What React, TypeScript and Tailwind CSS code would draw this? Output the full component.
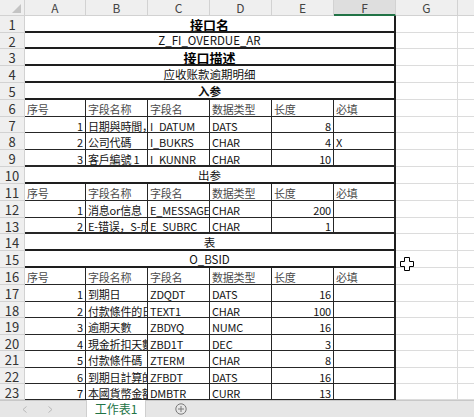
import React from 'react';

type Row =
  | { kind: 'merged'; text: string; weight?: 'bold' | 'semi'; b: 1 | 2 }
  | { kind: 'cells'; cells: string[]; head?: boolean; b: 1 | 2 };

const HEAD = ['序号', '字段名称', '字段名', '数据类型', '长度', '必填'];

const rows: Row[] = [
  { kind: 'merged', text: '接口名', weight: 'bold', b: 2 },
  { kind: 'merged', text: 'Z_FI_OVERDUE_AR', b: 2 },
  { kind: 'merged', text: '接口描述', weight: 'bold', b: 2 },
  { kind: 'merged', text: '应收账款逾期明细', b: 2 },
  { kind: 'merged', text: '入参', weight: 'semi', b: 2 },
  { kind: 'cells', cells: HEAD, head: true, b: 1 },
  { kind: 'cells', cells: ['1', '日期與時間，格式', 'I_DATUM', 'DATS', '8', ''], b: 1 },
  { kind: 'cells', cells: ['2', '公司代碼', 'I_BUKRS', 'CHAR', '4', 'X'], b: 1 },
  { kind: 'cells', cells: ['3', '客戶編號 1', 'I_KUNNR', 'CHAR', '10', ''], b: 2 },
  { kind: 'merged', text: '出参', b: 2 },
  { kind: 'cells', cells: HEAD, head: true, b: 1 },
  { kind: 'cells', cells: ['1', '消息or信息', 'E_MESSAGE', 'CHAR', '200', ''], b: 1 },
  { kind: 'cells', cells: ['2', 'E-错误，S-成功', 'E_SUBRC', 'CHAR', '1', ''], b: 2 },
  { kind: 'merged', text: '表', b: 2 },
  { kind: 'merged', text: 'O_BSID', b: 2 },
  { kind: 'cells', cells: HEAD, head: true, b: 1 },
  { kind: 'cells', cells: ['1', '到期日', 'ZDQDT', 'DATS', '16', ''], b: 1 },
  { kind: 'cells', cells: ['2', '付款條件的日期', 'TEXT1', 'CHAR', '100', ''], b: 1 },
  { kind: 'cells', cells: ['3', '逾期天數', 'ZBDYQ', 'NUMC', '16', ''], b: 1 },
  { kind: 'cells', cells: ['4', '現金折扣天數', 'ZBD1T', 'DEC', '3', ''], b: 1 },
  { kind: 'cells', cells: ['5', '付款條件碼', 'ZTERM', 'CHAR', '8', ''], b: 1 },
  { kind: 'cells', cells: ['6', '到期日計算的基準', 'ZFBDT', 'DATS', '16', ''], b: 1 },
  { kind: 'cells', cells: ['7', '本國貨幣金額', 'DMBTR', 'CURR', '13', ''], b: 1 },
];

// row heights, screenshot is a scaled excel window
const heights = [17, 16, 17, 17, 17, 17, 16, 17, 17, 17, 17, 17, 16, 17, 17, 17, 17, 16, 17, 16, 17, 16, 16];

const colLetters = ['A', 'B', 'C', 'D', 'E', 'F'];

function GridTail() {
  return (
    <>
      <div className="w-[62px] shrink-0 border-r border-b border-[#dcdcdc]" />
      <div className="flex-1 border-b border-[#dcdcdc]" />
    </>
  );
}

function SheetRow({ row, n, h }: { row: Row; n: number; h: number }) {
  const hClass = h === 17 ? 'h-[17px]' : 'h-[16px]';
  const bb = row.b === 2 ? 'border-b-2' : 'border-b';

  return (
    <div className={`flex ${hClass}`}>
      <div className="w-[25px] shrink-0 flex items-center justify-center pt-[1px] bg-[#efefef] border-r border-b border-[#d2d2d2] text-[13px] leading-none text-[#333]">
        {n}
      </div>
      {row.kind === 'merged' ? (
        <div
          className={`w-[371px] shrink-0 flex items-center justify-center pt-[2px] overflow-hidden whitespace-nowrap border-r-2 border-[#1e1e1e] ${bb} ${
            row.weight === 'bold'
              ? 'text-[13px] font-bold text-black'
              : row.weight === 'semi'
              ? 'text-[11.5px] font-semibold text-[#111]'
              : 'text-[11.5px] text-[#111]'
          } leading-none`}
        >
          {row.text}
        </div>
      ) : (
        row.cells.map((c, i) => {
          const right = !row.head && (i === 0 || i === 4);
          const w = i === 0 ? 'w-[61px]' : 'w-[62px]';
          const br = i === 5 ? 'border-r-2' : 'border-r';
          return (
            <div
              key={i}
              className={`${w} shrink-0 flex items-center pt-[3px] overflow-hidden whitespace-nowrap ${br} ${bb} border-[#262626] text-[11px] tracking-[-0.2px] leading-none ${
                right ? 'justify-end pr-[2px]' : 'pl-[2px]'
              } ${row.head ? 'text-[#4a4a4a]' : 'text-[#141414]'}`}
            >
              {c}
            </div>
          );
        })
      )}
      <GridTail />
    </div>
  );
}

function CrossCursor() {
  return (
    <svg className="absolute left-[400px] top-[257px]" width="14" height="14" viewBox="0 0 14 14">
      <path
        d="M4.5 0.5 H9.5 V4.5 H13.5 V9.5 H9.5 V13.5 H4.5 V9.5 H0.5 V4.5 H4.5 Z"
        fill="#fff"
        stroke="#000"
        strokeWidth="1"
      />
    </svg>
  );
}

export default function App() {
  return (
    <div className="relative w-[474px] h-[417px] overflow-hidden bg-white font-['Noto_Sans_CJK_SC',sans-serif]">
      {/* column headers */}
      <div className="flex h-[16px]">
        <div className="relative w-[25px] shrink-0 bg-[#efefef] border-r border-b border-[#d2d2d2]">
          <svg className="absolute right-[3px] bottom-[2px]" width="9" height="9" viewBox="0 0 9 9">
            <path d="M9 0 V9 H0 Z" fill="#c4c4c4" />
          </svg>
        </div>
        {colLetters.map((l, i) => (
          <div
            key={l}
            className={`${i === 0 ? 'w-[61px]' : 'w-[62px]'} shrink-0 flex items-center justify-center border-r text-[12px] leading-[13px] text-[#444] ${
              l === 'F'
                ? 'bg-[#dedede] border-b-2 border-b-[#217346] border-r-[#d2d2d2]'
                : 'bg-[#efefef] border-b border-[#d2d2d2]'
            }`}
          >
            {l}
          </div>
        ))}
        <div className="w-[62px] shrink-0 flex items-center justify-center bg-[#efefef] border-r border-b border-[#d2d2d2] text-[12px] leading-[13px] text-[#444]">
          G
        </div>
        <div className="flex-1 bg-[#efefef] border-b border-[#d2d2d2]" />
      </div>

      {rows.map((r, i) => (
        <SheetRow key={i} row={r} n={i + 1} h={heights[i]} />
      ))}

      {/* sheet tabs */}
      <div className="flex h-[17px] bg-[#e6e6e6] border-t border-[#c8c8c8]">
        <div className="w-[86px] shrink-0 flex items-center">
          <svg className="ml-[22px]" width="5" height="7" viewBox="0 0 5 7">
            <path d="M4.5 0.5 L1 3.5 L4.5 6.5" fill="none" stroke="#b8b8b8" strokeWidth="1" />
          </svg>
          <svg className="ml-[21px]" width="5" height="7" viewBox="0 0 5 7">
            <path d="M0.5 0.5 L4 3.5 L0.5 6.5" fill="none" stroke="#b8b8b8" strokeWidth="1" />
          </svg>
        </div>
        <div className="w-[60px] shrink-0 -mt-px flex items-center justify-center pt-[1px] bg-white border-x border-[#cfcfcf] text-[12px] leading-none text-[#217346]">
          工作表1
        </div>
        <div className="ml-[29px] flex items-center">
          <svg width="12" height="12" viewBox="0 0 12 12">
            <circle cx="6" cy="6" r="5.2" fill="none" stroke="#7a7a7a" strokeWidth="1" />
            <path d="M6 3 V9 M3 6 H9" stroke="#7a7a7a" strokeWidth="1" />
          </svg>
        </div>
      </div>

      <CrossCursor />
    </div>
  );
}
